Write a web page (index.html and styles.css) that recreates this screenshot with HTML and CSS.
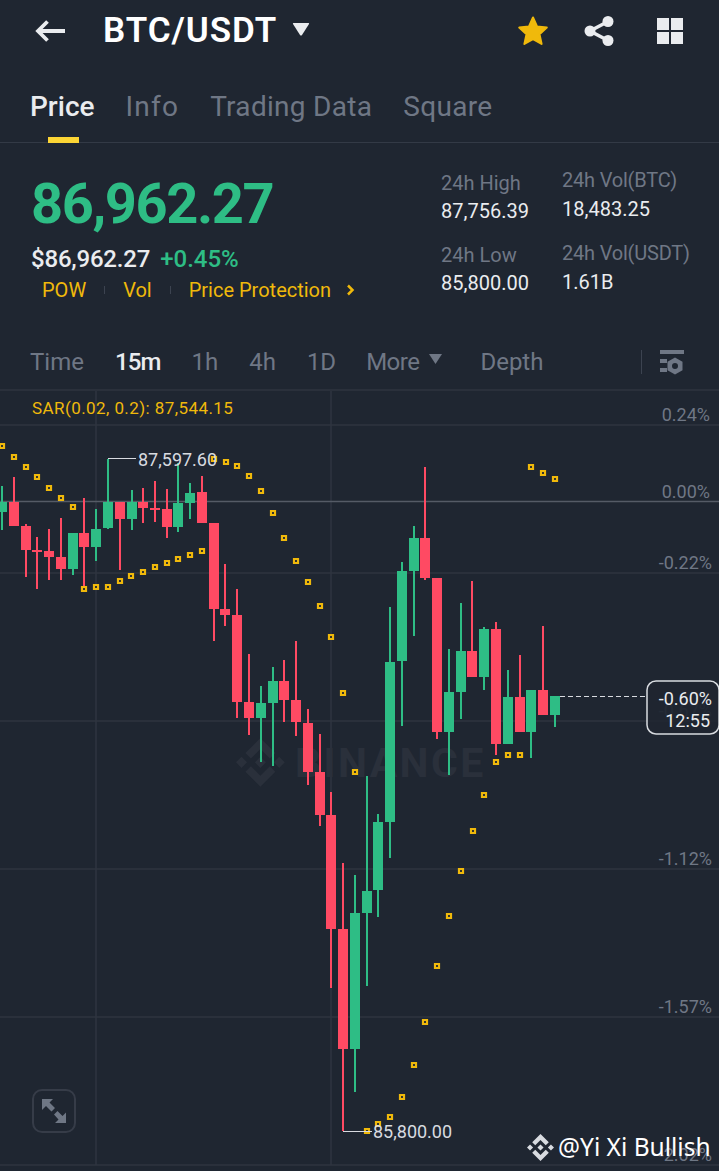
FILE: index.html
```html
<!DOCTYPE html>
<html lang="en">
<head>
<meta charset="utf-8">
<title>BTC/USDT</title>
<link rel="stylesheet" href="styles.css">
</head>
<body>
<div class="page">
  <header class="top">
    <svg class="back" width="30" height="24" viewBox="0 0 30 24"><path d="M30 12H3M12.500 2.500 3 12l9.500 9.500"/></svg>
    <h1 class="pair">BTC/USDT</h1>
    <svg class="caret" width="18" height="14" viewBox="0 0 18 14"><path d="M1.500 1h15q1 0 .5 1L10 13q-1 1-2 0L1 2q-.5-1 .5-1z"/></svg>
    <div class="top-icons">
      <svg class="star" width="32" height="32" viewBox="0 0 32 32"><path d="M16 2.500l4 9 9.800 1.100-7.300 6.600 2.100 9.700L16 24.100 7.400 28.900l2.100-9.700-7.300-6.600L12 11.500z"/></svg>
      <svg class="share" width="30" height="32" viewBox="0 0 30 32"><path class="share-line" d="M24 6.500 6 16l18 9.500"/><circle cx="24" cy="6.500" r="5.500"/><circle cx="6" cy="16" r="5.500"/><circle cx="24" cy="25.500" r="5.500"/></svg>
      <div class="grid-icon"><i></i><i></i><i></i><i></i></div>
    </div>
  </header>

  <nav class="tabs">
    <span class="tab active">Price</span>
    <span class="tab tab-info">Info</span>
    <span class="tab">Trading Data</span>
    <span class="tab">Square</span>
  </nav>

  <section class="stats">
    <div class="main">
      <div class="price">86,962.27</div>
      <div class="sub"><span class="usd">$86,962.27</span><span class="change">+0.45%</span></div>
      <div class="tags">
        <span>POW</span><i class="tick"></i><span>Vol</span><i class="tick"></i><span>Price Protection</span>
        <svg class="chev" width="9" height="12" viewBox="0 0 9 12"><path d="M2 1.500 6.500 6 2 10.500"/></svg>
      </div>
    </div>
    <div class="col col-a">
      <div class="label">24h High</div><div class="value">87,756.39</div>
      <div class="label next">24h Low</div><div class="value">85,800.00</div>
    </div>
    <div class="col col-b">
      <div class="label">24h Vol(BTC)</div><div class="value">18,483.25</div>
      <div class="label next">24h Vol(USDT)</div><div class="value">1.61B</div>
    </div>
  </section>

  <div class="times">
    <span>Time</span><span class="on">15m</span><span>1h</span><span>4h</span><span>1D</span>
    <span class="more">More<svg width="13" height="10" viewBox="0 0 13 10"><path d="M0 0h13L6.500 10z"/></svg></span>
    <span class="depth">Depth</span>
    <i class="bar"></i>
    <svg class="cfg" width="24" height="25" viewBox="0 0 24 25"><path d="M0 0h24v4H0zM0 9h7v4H0zM0 18h7v4H0z"/><path fill-rule="evenodd" d="M15 7.500l7.500 4.200v8.600L15 24.500l-7.500-4.200v-8.600zM15 13a3 3 0 1 0 0 6 3 3 0 0 0 0-6z"/></svg>
  </div>

  <main class="chart">
    <svg class="plot" width="719" height="780" viewBox="0 391 719 780">
      <path class="grid" d="M0 425H719M0 573H719M0 721H719M0 869H719M0 1017H719M0 1165H719"/>
      <path class="vgrid" d="M96 391V1165M331 391V1165"/>
      <path class="zero" d="M0 501.500H719"/>
      <g class="wm">
        <path transform="translate(236 738) scale(.385)" d="m38.730 53.200 24.590-24.580 24.600 24.600 14.300-14.310L63.320 0 24.420 38.900zM0 63.310l14.300-14.310 14.310 14.310-14.310 14.300zM38.730 73.410l24.590 24.590 24.600-24.600 14.310 14.290-38.900 38.910-38.910-38.880-.02-.02zM98 63.310l14.300-14.310 14.310 14.300-14.310 14.320zM77.830 63.300 63.320 48.780 52.590 59.510l-1.240 1.230-2.540 2.540 14.510 14.500 14.510-14.470z"/>
        <text class="wm-text" x="295" y="777">BINANCE</text>
      </g>
      <text class="axis" x="710" y="421">0.24%</text>
      <text class="axis" x="710" y="498">0.00%</text>
      <text class="axis" x="712" y="569">-0.22%</text>
      <text class="axis" x="712" y="865">-1.12%</text>
      <text class="axis" x="712" y="1013">-1.57%</text>
      <text class="axis" x="712" y="1161">-2.02%</text>
      <path class="wick-r" d="M14 477V526M26 524V577M37 537V589M49 529V580M61 518V580M84 498V587M120 502V570M143 488V523M155 481V522M167 489V538M202 476V523M214 523V641M225 564V626M237 589V718M249 654V735M284 660V722M296 641V736M308 709V785M320 734V826M331 792V988M343 863V1131M425 467V580M437 578V739M472 581V677M496 622V755M520 655V732M543 626V715"/>
      <path class="body-r" d="M14 502V526M26 526V550M37 550V552M49 551V557M61 557V569M84 533V547M120 502V519M143 502V508M155 508V510M167 509V527M202 492V523M214 523V609M225 609V615M237 615V702M249 702V718M284 681V700M296 700V722M308 723V772M320 772V815M331 815V929M343 929V1049M425 538V578M437 578V732M472 651V677M496 629V744M520 697V732M543 690V715"/>
      <path class="wick-g" d="M2 486V530M73 533V575M96 509V561M108 459V529M132 490V530M178 463V532M190 483V519M261 686V762M273 667V766M355 875V1092M367 776V986M378 814V917M390 607V858M402 562V726M414 526V636M449 649V775M461 603V719M484 627V690M508 670V744M531 690V758M555 696V727"/>
      <path class="body-g" d="M2 502V512M73 533V569M96 529V547M108 502V528M132 502V519M178 503V527M190 493V503M261 703V718M273 681V703M355 913V1049M367 891V913M378 822V890M390 662V822M402 571V661M414 538V571M449 692V732M461 651V692M484 629V677M508 697V744M531 690V732M555 696V715"/>
      <path class="sar" d="M0 444h4v4h-4zM12 455h4v4h-4zM24 465h4v4h-4zM35 475h4v4h-4zM47 486h4v4h-4zM59 496h4v4h-4zM71 505h4v4h-4zM82 587h4v4h-4zM94 585h4v4h-4zM106 585h4v4h-4zM118 579h4v4h-4zM129 574h4v4h-4zM141 570h4v4h-4zM153 565h4v4h-4zM165 561h4v4h-4zM176 557h4v4h-4zM188 553h4v4h-4zM200 549h4v4h-4zM212 457h4v4h-4zM224 460h4v4h-4zM235 464h4v4h-4zM247 474h4v4h-4zM259 489h4v4h-4zM271 511h4v4h-4zM282 536h4v4h-4zM294 559h4v4h-4zM306 580h4v4h-4zM318 604h4v4h-4zM329 635h4v4h-4zM341 691h4v4h-4zM353 770h4v4h-4zM365 1129h4v4h-4zM376 1122h4v4h-4zM388 1115h4v4h-4zM400 1095h4v4h-4zM412 1063h4v4h-4zM423 1020h4v4h-4zM435 964h4v4h-4zM447 914h4v4h-4zM459 869h4v4h-4zM471 829h4v4h-4zM482 793h4v4h-4zM494 760h4v4h-4zM506 753h4v4h-4zM518 753h4v4h-4zM529 465h4v4h-4zM541 471h4v4h-4zM553 477h4v4h-4z"/>
      <path class="lead" d="M108 458.500H136M343 1131.500H372"/>
      <text class="extreme" x="138" y="466">87,597.60</text>
      <text class="extreme" x="373" y="1138">85,800.00</text>
      <path class="dash" d="M560 696.500H646"/>
      <text class="axis ghost" x="712" y="717">-0.67%</text>
      <rect class="badge" x="647" y="681" width="72" height="53" rx="9"/>
      <text class="badge-t" x="712" y="705">-0.60%</text>
      <text class="badge-t" x="710" y="727">12:55</text>
    </svg>
    <div class="legend">SAR(0.02, 0.2): 87,544.15</div>
    <button class="expand" type="button" aria-label="Expand">
      <svg width="26" height="26" viewBox="0 0 26 26"><path d="M1 1h11l-3.500 3.500L14 10l-3.500 3.500L5 8l-4 4zM25 25H14l3.500-3.500L13 16.500l3.500-3.500 5 5 3.500-3.500z"/></svg>
    </button>
    <div class="credit">
      <svg width="27" height="27" viewBox="0 0 126.610 126.610"><path d="m38.730 53.200 24.590-24.580 24.600 24.600 14.300-14.310L63.320 0 24.420 38.900zM0 63.310l14.300-14.310 14.310 14.310-14.310 14.300zM38.730 73.410l24.590 24.590 24.600-24.600 14.310 14.290-38.900 38.910-38.910-38.880-.02-.02zM98 63.310l14.300-14.310 14.310 14.300-14.310 14.320zM77.830 63.300 63.320 48.780 52.590 59.510l-1.240 1.230-2.540 2.540 14.510 14.500 14.510-14.470z"/></svg>
      <span>@Yi Xi Bullish</span>
    </div>
  </main>
</div>
</body>
</html>
```
FILE: styles.css
```css
* { box-sizing: border-box; }
html, body { margin: 0; padding: 0; background: #1f2631; }
body { font-family: Roboto, "Noto Sans", sans-serif; color: #eaecef; }
.page { width: 719px; height: 1171px; overflow: hidden; }

.top { height: 62px; display: flex; align-items: center; padding-left: 35px; }
.back { fill: none; stroke: #eaecef; stroke-width: 3.8; }
.pair { margin: 0 0 0 38px; font-size: 35px; line-height: 40px; font-weight: 600; letter-spacing: .95px; color: #fff; }
.caret { margin: -4px 0 0 15px; fill: #eaecef; }
.top-icons { margin-left: auto; display: flex; align-items: center; padding-right: 36px; }
.star { fill: #f0b90b; stroke: #f0b90b; stroke-width: 2; stroke-linejoin: round; margin-right: 35px; }
.share { fill: #eaecef; margin-right: 43px; }
.share-line { fill: none; stroke: #eaecef; stroke-width: 3.5; }
.grid-icon { display: grid; grid-template-columns: 12px 12px; grid-auto-rows: 12px; gap: 2px; }
.grid-icon i { background: #eaecef; }

.tabs { height: 81px; display: flex; padding: 29px 0 0 30px; gap: 31px; border-bottom: 1px solid #333a46; }
.tab { position: relative; font-size: 28px; line-height: 32px; font-weight: 400; color: #6f7785; letter-spacing: .3px; }
.tab-info { letter-spacing: 1.2px; }
.tab.active { color: #eaecef; font-weight: 500; letter-spacing: 0; }
.tab.active::after { content: ""; position: absolute; left: 18px; width: 31px; height: 6px; top: 46px; background: #fcd535; }

.stats { height: 196px; display: flex; }
.main { width: 441px; padding: 31px 0 0 31px; }
.price { font-size: 56px; line-height: 60px; font-weight: 700; color: #2ebd85; letter-spacing: -1.4px; }
.sub { margin-top: 10px; display: flex; gap: 10px; font-size: 24px; line-height: 30px; }
.usd { color: #eaecef; font-weight: 500; letter-spacing: -.2px; }
.change { color: #2ebd85; font-weight: 500; }
.tags { margin: 3px 0 0 11px; display: flex; align-items: center; font-size: 20px; line-height: 26px; color: #f0b90b; }
.tick { width: 1px; height: 8px; background: #3c4350; margin: 0 18px 0 18px; }
.chev { margin-left: 15px; fill: none; stroke: #f0b90b; stroke-width: 2.500; }
.col { width: 121px; }
.col-a { padding-top: 26px; }
.col-b { padding-top: 23px; }
.label { font-size: 20px; line-height: 28px; color: #6f7785; white-space: nowrap; }
.col-b .label { letter-spacing: -.2px; }
.value { font-size: 20px; line-height: 28px; color: #eaecef; }
.label.next { margin-top: 16px; }
.col-b .value { margin-top: 1px; }

.times { height: 52px; display: flex; align-items: center; padding: 0 0 4px 30px; gap: 31px; font-size: 24px; color: #6f7785; border-bottom: 2px solid #2a303b; }
.times .on { color: #eaecef; font-weight: 500; letter-spacing: -.9px; }
.more { display: flex; align-items: center; gap: 10px; margin-left: -1px; letter-spacing: -.5px; }
.more svg { fill: #6f7785; margin-top: -7px; }
.depth { margin-left: 7px; }
.bar { width: 1px; height: 24px; background: #3c4350; margin-left: 67px; }
.cfg { fill: #6f7785; margin-left: -13px; }

.chart { position: relative; height: 780px; overflow: hidden; }
.plot { display: block; }
.grid { stroke: #2a303b; stroke-width: 2; fill: none; }
.vgrid { stroke: #2f3540; stroke-width: 1.500; fill: none; }
.zero { stroke: #555b66; stroke-width: 1.500; fill: none; }
.wm { fill: #2a303b; }
.wm-text { font-size: 41px; font-weight: 700; letter-spacing: 2.400px; }
.axis { font-size: 18px; fill: #6f7785; text-anchor: end; }
.ghost { opacity: .35; }
.wick-r, .body-r { stroke: #ff4a63; fill: none; }
.wick-g, .body-g { stroke: #2ebd85; fill: none; }
.wick-r, .wick-g { stroke-width: 2; }
.body-r, .body-g { stroke-width: 10; }
.sar { fill: #1f2631; stroke: #f0b90b; stroke-width: 2.200; }
.lead { stroke: #d8dbe0; stroke-width: 1; fill: none; }
.extreme { font-size: 18px; fill: #d8dbe0; }
.dash { stroke: #d8dbe0; stroke-width: 1; stroke-dasharray: 5 3; fill: none; }
.badge { fill: rgba(31, 38, 49, .8); stroke: #d8dbe0; stroke-width: 1.500; }
.badge-t { font-size: 18px; fill: #eaecef; text-anchor: end; }

.legend { position: absolute; left: 32px; top: 7px; font-size: 17px; line-height: 20px; letter-spacing: .42px; color: #f0b90b; }
.expand { position: absolute; left: 32px; top: 698px; width: 44px; height: 44px; padding: 0; border: 2px solid #363c48; border-radius: 10px; background: none; display: flex; align-items: center; justify-content: center; }
.expand svg { fill: #6f7785; }
.credit { position: absolute; left: 527px; top: 741px; display: flex; align-items: center; gap: 4px; color: #fff; font-family: "Noto Sans", sans-serif; font-size: 24.500px; line-height: 30px; white-space: nowrap; }
.credit svg { fill: #d8dbe0; }
```
